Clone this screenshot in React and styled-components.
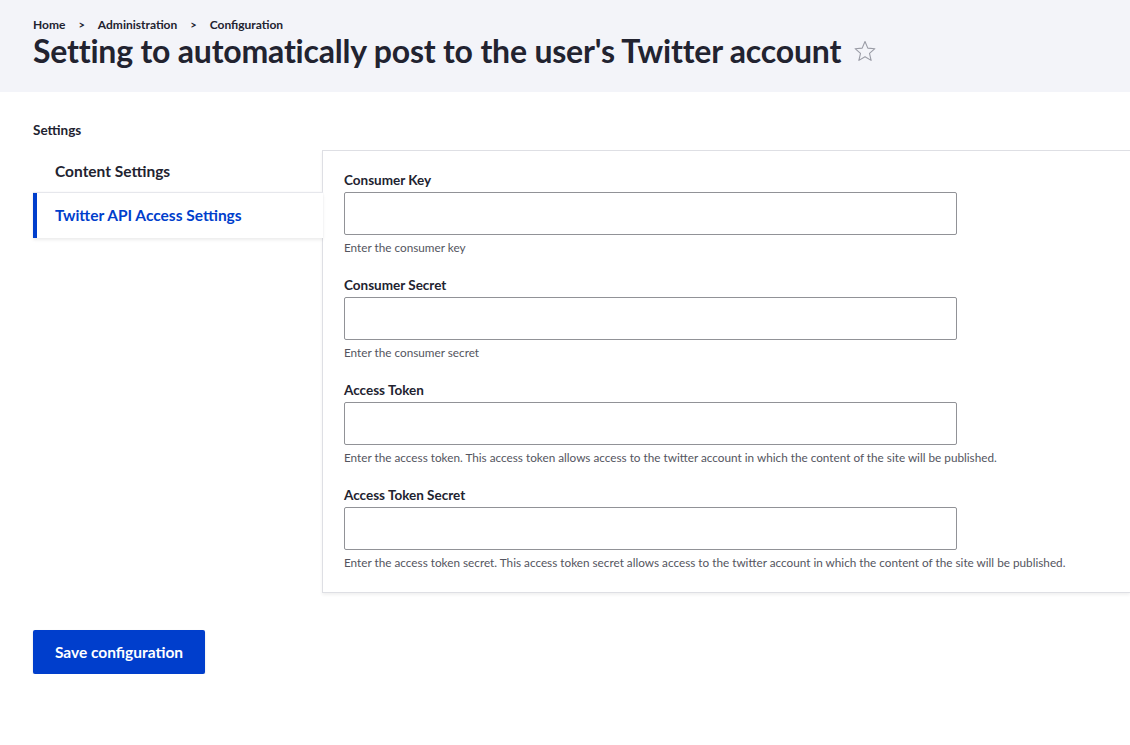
import React from "react";
import styled, { createGlobalStyle } from "styled-components";

const GlobalStyle = createGlobalStyle`
    body {
        margin: 0;
        background: #ffffff;
        color: #222330;
        font-family: Lato, "Noto Sans", sans-serif;
    }
    * {
        box-sizing: border-box;
    }
`;

const Header = styled.header`
    background-color: #f3f4f9;
    height: 92px;
    padding: 16px 33px 0;
`;

const Breadcrumb = styled.nav`
    display: flex;
    align-items: center;
    font-size: 12px;
    font-weight: 700;
    line-height: 17px;
`;

const Crumb = styled.a`
    color: #222330;
    text-decoration: none;
`;

const Separator = styled.span`
    display: inline-block;
    padding: 0 13px;
    font-size: 11px;
`;

const Title = styled.h1`
    display: flex;
    align-items: center;
    gap: 12px;
    margin: 0;
    font-size: 32px;
    line-height: 36px;
    font-weight: 700;
    letter-spacing: -0.2px;
`;

const Main = styled.main`
    padding: 30px 0 0 33px;
`;

const SectionLabel = styled.div`
    font-size: 13.5px;
    font-weight: 700;
    line-height: 17px;
    margin-bottom: 11px;
`;

const VerticalTabs = styled.div`
    display: flex;
    align-items: flex-start;
`;

const TabMenu = styled.ul`
    list-style: none;
    margin: 0;
    padding: 0;
    width: 289px;
    flex-shrink: 0;
    position: relative;
    z-index: 1;
`;

const TabItem = styled.li`
    height: ${(props) => (props.$active ? "45px" : "43px")};
    display: flex;
    align-items: center;
    padding-left: ${(props) => (props.$active ? "18px" : "22px")};
    padding-bottom: 1px;
    font-size: 15.5px;
    font-weight: 700;
    color: ${(props) => (props.$active ? "#003ecc" : "#222330")};
    background: ${(props) => (props.$active ? "#ffffff" : "transparent")};
    border-left: ${(props) => (props.$active ? "4px solid #003ecc" : "none")};
    box-shadow: ${(props) =>
        props.$active ? "0 -1px 1px #e6e7ec, 0 2px 3px rgba(0, 0, 0, 0.08)" : "none"};
    margin-right: ${(props) => (props.$active ? "-1px" : "0")};
`;

const Panel = styled.div`
    flex: 1;
    border: 1px solid #dedfe4;
    border-right: none;
    box-shadow: 0 2px 3px rgba(0, 0, 0, 0.06);
    padding: 20px 21px 22px;
`;

const Field = styled.div`
    & + & {
        margin-top: 21px;
    }
`;

const Label = styled.label`
    display: block;
    font-size: 13.5px;
    font-weight: 700;
    line-height: 18px;
    margin-bottom: 3px;
`;

const Input = styled.input`
    display: block;
    width: 613px;
    height: 43px;
    border: 1px solid #919297;
    border-radius: 2px;
    background: #ffffff;
    font: inherit;
    padding: 0 12px;
`;

const Description = styled.div`
    margin-top: 6px;
    font-size: 11.75px;
    line-height: 14px;
    color: #545560;
`;

const SaveButton = styled.button`
    margin-top: 37px;
    width: 172px;
    height: 44px;
    border: none;
    border-radius: 2px;
    background-color: #003ecc;
    color: #ffffff;
    font-family: inherit;
    font-size: 15.5px;
    font-weight: 700;
    box-shadow: 0 1px 2px rgba(0, 0, 0, 0.15);
    cursor: pointer;
`;

const Star = () => (
    <svg width="24" height="24" viewBox="0 0 24 24" fill="none">
        <path
            d="M12 2.5l2.8 6.6 7.1.6-5.4 4.7 1.6 7-6.1-3.7-6.1 3.7 1.6-7L2.1 9.7l7.1-.6z"
            stroke="#9a9ca6"
            strokeWidth="1.1"
            strokeLinejoin="round"
        />
    </svg>
);

const fields = [
    {
        label: "Consumer Key",
        description: "Enter the consumer key",
    },
    {
        label: "Consumer Secret",
        description: "Enter the consumer secret",
    },
    {
        label: "Access Token",
        description:
            "Enter the access token. This access token allows access to the twitter account in which the content of the site will be published.",
    },
    {
        label: "Access Token Secret",
        description:
            "Enter the access token secret. This access token secret allows access to the twitter account in which the content of the site will be published.",
    },
];

const App = () => {
    return (
        <>
            <GlobalStyle />
            <Header>
                <Breadcrumb>
                    <Crumb href="#">Home</Crumb>
                    <Separator>&gt;</Separator>
                    <Crumb href="#">Administration</Crumb>
                    <Separator>&gt;</Separator>
                    <Crumb href="#">Configuration</Crumb>
                </Breadcrumb>
                <Title>
                    Setting to automatically post to the user's Twitter account
                    <Star />
                </Title>
            </Header>
            <Main>
                <SectionLabel>Settings</SectionLabel>
                <VerticalTabs>
                    <TabMenu>
                        <TabItem>Content Settings</TabItem>
                        <TabItem $active>Twitter API Access Settings</TabItem>
                    </TabMenu>
                    <Panel>
                        {fields.map((item, index) => (
                            <Field key={index}>
                                <Label>{item.label}</Label>
                                <Input type="text" />
                                <Description>{item.description}</Description>
                            </Field>
                        ))}
                    </Panel>
                </VerticalTabs>
                <SaveButton>Save configuration</SaveButton>
            </Main>
        </>
    );
};

export default App;
